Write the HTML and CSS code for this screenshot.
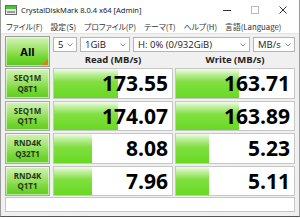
FILE: index.html
```html
<!DOCTYPE html>
<html lang="ja">
<head>
<meta charset="utf-8">
<title>CrystalDiskMark</title>
<link rel="stylesheet" href="styles.css">
</head>
<body>
<div class="window">
  <div class="titlebar">
    <svg class="app-icon" width="12" height="10" viewBox="0 0 12 10">
      <rect x="0.5" y="0.5" width="11" height="9" fill="#e8e8e8" stroke="#6a6a6a"/>
      <rect x="1" y="1" width="10" height="3" fill="#4cc23a"/>
      <rect x="2" y="6" width="8" height="2" fill="#9a9a9a"/>
    </svg>
    <span class="title">CrystalDiskMark 8.0.4 x64 [Admin]</span>
    <div class="controls">
      <span class="ctl"><svg width="8" height="8" viewBox="0 0 8 8"><line x1="0" y1="4.5" x2="8" y2="4.5" stroke="#333" stroke-width="1"/></svg></span>
      <span class="ctl"><svg width="8" height="8" viewBox="0 0 8 8"><rect x="0.5" y="0.5" width="7" height="7" fill="none" stroke="#bbb" stroke-width="1"/></svg></span>
      <span class="ctl"><svg width="8" height="8" viewBox="0 0 8 8"><path d="M0.5 0.5 L7.5 7.5 M7.5 0.5 L0.5 7.5" stroke="#333" stroke-width="1"/></svg></span>
    </div>
  </div>
  <div class="menubar">
    <span class="menu-item">ファイル(F)</span>
    <span class="menu-item">設定(S)</span>
    <span class="menu-item">プロファイル(P)</span>
    <span class="menu-item">テーマ(T)</span>
    <span class="menu-item">ヘルプ(H)</span>
    <span class="menu-item">言語(Language)</span>
  </div>
  <div class="main">
    <div class="top">
      <div class="all-btn">All<span class="corner"></span></div>
      <div class="combos">
        <div class="combo c-count"><span>5</span><svg class="chev" width="6" height="4" viewBox="0 0 6 4"><polyline points="0.5,0.5 3,3 5.5,0.5" fill="none" stroke="#8a8a8a"/></svg></div>
        <div class="combo c-size"><span>1GiB</span><svg class="chev" width="6" height="4" viewBox="0 0 6 4"><polyline points="0.5,0.5 3,3 5.5,0.5" fill="none" stroke="#8a8a8a"/></svg></div>
        <div class="combo c-drive"><span>H: 0% (0/932GiB)</span><svg class="chev" width="6" height="4" viewBox="0 0 6 4"><polyline points="0.5,0.5 3,3 5.5,0.5" fill="none" stroke="#8a8a8a"/></svg></div>
        <div class="combo c-unit"><span>MB/s</span><svg class="chev" width="6" height="4" viewBox="0 0 6 4"><polyline points="0.5,0.5 3,3 5.5,0.5" fill="none" stroke="#8a8a8a"/></svg></div>
      </div>
      <div class="head">Read (MB/s)</div>
      <div class="head">Write (MB/s)</div>
    </div>
    <div class="results">
      <div class="label"><span>SEQ1M</span><span>Q8T1</span></div>
      <div class="cell" style="background-size:64px 100%"><span class="val">173.55</span></div>
      <div class="cell" style="background-size:63px 100%"><span class="val">163.71</span></div>

      <div class="label"><span>SEQ1M</span><span>Q1T1</span></div>
      <div class="cell" style="background-size:64px 100%"><span class="val">174.07</span></div>
      <div class="cell" style="background-size:63px 100%"><span class="val">163.89</span></div>

      <div class="label"><span>RND4K</span><span>Q32T1</span></div>
      <div class="cell" style="background-size:38px 100%"><span class="val">8.08</span></div>
      <div class="cell" style="background-size:33px 100%"><span class="val">5.23</span></div>

      <div class="label"><span>RND4K</span><span>Q1T1</span></div>
      <div class="cell" style="background-size:38px 100%"><span class="val">7.96</span></div>
      <div class="cell" style="background-size:33px 100%"><span class="val">5.11</span></div>
    </div>
    <div class="comment"></div>
  </div>
</div>
</body>
</html>
```
FILE: styles.css
```css
html, body {
  margin: 0;
  padding: 0;
  background: #ffffff;
}

.window {
  width: 300px;
  height: 217px;
  box-sizing: border-box;
  border-left: 1px solid #9a9a9a;
  border-right: 1px solid #9a9a9a;
  border-bottom: 1px solid #555555;
  background: #f0f0f0;
  display: flex;
  flex-direction: column;
  font-family: "Open Sans", "Noto Sans", sans-serif;
  color: #000;
}

.titlebar {
  height: 20px;
  background: #ffffff;
  display: flex;
  align-items: center;
  flex-shrink: 0;
}

.app-icon {
  margin-left: 4px;
  margin-right: 4px;
  flex-shrink: 0;
}

.title {
  font-family: "Noto Sans", sans-serif;
  font-size: 7.5px;
  color: #222;
  white-space: nowrap;
}

.controls {
  margin-left: auto;
  display: flex;
  align-items: center;
  gap: 20px;
  margin-right: 12px;
}

.ctl {
  display: flex;
  width: 8px;
  height: 8px;
}

.menubar {
  height: 13px;
  background: #ffffff;
  border-bottom: 1px solid #e4e4e4;
  display: flex;
  align-items: center;
  gap: 8px;
  padding-left: 5px;
  font-family: "Noto Sans CJK JP", sans-serif;
  font-feature-settings: "palt";
  font-size: 7.8px;
  color: #333;
  flex-shrink: 0;
  white-space: nowrap;
}

.main {
  padding: 2px 3px 0 4px;
  display: flex;
  flex-direction: column;
}

.top {
  display: grid;
  grid-template-columns: 46px 120px 120px;
  grid-template-rows: 16px 15px;
  column-gap: 2px;
}

.all-btn {
  grid-row: 1 / 3;
  grid-column: 1;
  width: 45px;
  height: 31px;
  box-sizing: border-box;
  border: 1px solid #9c9c9c;
  box-shadow: inset 0 0 0 1px rgba(255, 255, 255, 0.5);
  background: linear-gradient(to bottom, #d6f4bc 0%, #a2e46e 40%, #6ed42c 75%, #5cc81c 100%);
  display: flex;
  align-items: center;
  justify-content: center;
  font-weight: 700;
  font-size: 11px;
  position: relative;
}

.corner {
  position: absolute;
  right: 1px;
  bottom: 1px;
  width: 0;
  height: 0;
  border-left: 6px solid transparent;
  border-bottom: 6px solid #e67a1e;
}

.combos {
  grid-column: 2 / 4;
  grid-row: 1;
  display: flex;
  gap: 3px;
  margin-top: 1px;
  height: 15px;
}

.combo {
  box-sizing: border-box;
  height: 15px;
  border: 1px solid #b4b4b4;
  background: #ffffff;
  display: flex;
  align-items: center;
  justify-content: space-between;
  padding: 0 3px 0 4px;
  font-size: 9.5px;
  color: #222;
  white-space: nowrap;
}

.c-count { width: 24px; }
.c-size { width: 50px; }
.c-drive { width: 117px; }
.c-unit { width: 42px; }

.chev { flex-shrink: 0; }

.head {
  grid-row: 2;
  text-align: center;
  font-weight: 700;
  font-size: 9.5px;
  line-height: 15px;
  color: #222;
}

.results {
  display: grid;
  grid-template-columns: 46px 120px 120px;
  grid-template-rows: 31px 30px 31px 30px;
  column-gap: 2px;
  row-gap: 2px;
  margin-top: 1px;
}

.label {
  width: 45px;
  box-sizing: border-box;
  border: 1px solid #a8a8a8;
  box-shadow: inset 0 0 0 1px rgba(255, 255, 255, 0.55);
  background: linear-gradient(to bottom, #d4f2bc 0%, #a4e470 40%, #74d634 75%, #62cc22 100%);
  display: flex;
  flex-direction: column;
  align-items: center;
  justify-content: center;
  font-weight: 700;
  font-size: 8px;
  line-height: 10.5px;
  color: #1e3a12;
}

.cell {
  box-sizing: border-box;
  border: 1px solid #c6c6c6;
  background: linear-gradient(to bottom, #f0fbe8 0%, #b8ee92 20%, #80df40 45%, #68d922 100%) no-repeat, #ffffff;
  display: flex;
  align-items: center;
  justify-content: flex-end;
  padding-right: 4px;
}

.val {
  font-weight: 700;
  font-size: 21px;
  line-height: 1;
  color: #000;
}

.comment {
  margin-top: 1px;
  width: 290px;
  height: 15px;
  box-sizing: border-box;
  border: 1px solid #c6c6c6;
  background: #ffffff;
}
```
